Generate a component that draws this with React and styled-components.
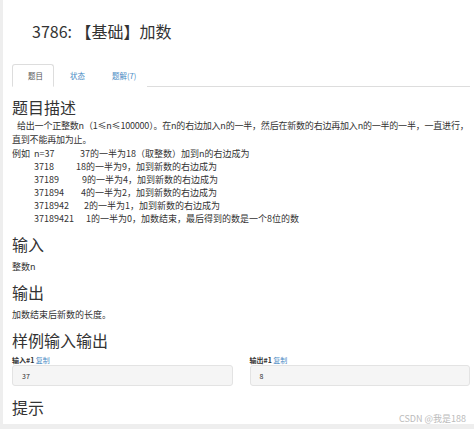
import React from 'react';
import styled, { createGlobalStyle } from 'styled-components';

const GlobalStyle = createGlobalStyle`
  html, body {
    margin: 0;
    padding: 0;
    background: #eeeeee;
  }
  body {
    font-family: "Noto Sans CJK SC", "Noto Sans", sans-serif;
    color: #333;
  }
`;

const TABS = [
  { label: '题目', active: true },
  { label: '状态' },
  { label: '题解(7)' },
];

const EXAMPLES = [
  { lead: '例如', num: 'n=37', descX: 80, desc: '37的一半为18（取整数）加到n的右边成为' },
  { num: '3718', descX: 76, desc: '18的一半为9，加到新数的右边成为' },
  { num: '37189', descX: 82, desc: '9的一半为4，加到新数的右边成为' },
  { num: '371894', descX: 81, desc: '4的一半为2，加到新数的右边成为' },
  { num: '3718942', descX: 84, desc: '2的一半为1，加到新数的右边成为' },
  { num: '37189421', descX: 86, desc: '1的一半为0，加数结束，最后得到的数是一个8位的数' },
];

const SAMPLES = [
  { label: '输入#1', value: '37' },
  { label: '输出#1', value: '8' },
];

const App = () => {
  return (
    <>
      <GlobalStyle />
      <Panel>
        <Title>3786: 【基础】加数</Title>
        <TabBar>
          {TABS.map((tab) => (
            <Tab key={tab.label} active={tab.active}>
              {tab.label}
            </Tab>
          ))}
        </TabBar>

        <Heading first>题目描述</Heading>
        <Body first>
          <Intro>
            给出一个正整数n（1≤n≤100000）。在n的右边加入n的一半，然后在新数的右边再加入n的一半的一半，一直进行，
            <br />
            直到不能再加为止。
          </Intro>
          {EXAMPLES.map((row) => (
            <ExampleRow key={row.num}>
              <Lead>{row.lead}</Lead>
              <Num style={{ width: row.descX - 34 }}>{row.num}</Num>
              <span>{row.desc}</span>
            </ExampleRow>
          ))}
        </Body>

        <Heading>输入</Heading>
        <Body>整数n</Body>

        <Heading>输出</Heading>
        <Body>加数结束后新数的长度。</Body>

        <Heading>样例输入输出</Heading>
        <SampleGrid>
          {SAMPLES.map((s) => (
            <div key={s.label}>
              <SampleLabel>
                {s.label} <CopyLink>复制</CopyLink>
              </SampleLabel>
              <SampleBox>{s.value}</SampleBox>
            </div>
          ))}
        </SampleGrid>

        <Heading hint>提示</Heading>
        <Watermark>CSDN @我是188</Watermark>
      </Panel>
    </>
  );
};

const Panel = styled.div`
  position: relative;
  box-sizing: border-box;
  margin-left: 3px;
  height: 424px;
  padding: 21px 4px 0 9px;
  background: #fff;
  overflow: hidden;
`;

const Title = styled.h1`
  margin: 0 0 23px 20px;
  font-size: 16px;
  line-height: 20px;
  font-weight: 400;
  color: #333;
`;

const TabBar = styled.div`
  display: flex;
  height: 22px;
  border-bottom: 1px solid #ddd;
`;

const Tab = styled.div`
  box-sizing: border-box;
  height: 23px;
  padding: 0 10px 0 15px;
  display: flex;
  align-items: center;
  font-size: 7.5px;
  color: ${(p) => (p.active ? '#555' : '#4a8bc4')};
  background: #fff;
  border: 1px solid ${(p) => (p.active ? '#ddd' : 'transparent')};
  border-bottom-color: ${(p) => (p.active ? '#fff' : 'transparent')};
  border-radius: 3px 3px 0 0;
`;

const Heading = styled.h2`
  margin: ${(p) => (p.first ? '11px' : p.hint ? '12px' : '10px')} 0 0;
  font-size: 16px;
  line-height: 18px;
  font-weight: 400;
  color: #333;
`;

const Body = styled.div`
  margin-top: ${(p) => (p.first ? '3px' : '7px')};
  font-size: 9px;
  line-height: 13px;
  color: #333;
`;

const Intro = styled.p`
  margin: 0;
  line-height: 14px;
  text-indent: 5px;
  letter-spacing: -0.2px;
  white-space: nowrap;
`;

const ExampleRow = styled.div`
  display: flex;
  white-space: nowrap;
`;

const Lead = styled.span`
  width: 22px;
  flex-shrink: 0;
`;

const Num = styled.span`
  flex-shrink: 0;
`;

const SampleGrid = styled.div`
  display: grid;
  grid-template-columns: 1fr 1fr;
  column-gap: 17px;
  margin-top: 6px;
`;

const SampleLabel = styled.div`
  font-size: 7px;
  line-height: 10px;
  font-weight: 700;
  color: #333;
`;

const CopyLink = styled.span`
  font-weight: 400;
  color: #4a8bc4;
`;

const SampleBox = styled.div`
  box-sizing: border-box;
  margin-top: 0;
  height: 21px;
  padding: 0 9px;
  display: flex;
  align-items: center;
  font-size: 7px;
  color: #333;
  background: #f5f5f5;
  border: 1px solid #e3e3e3;
  border-radius: 3px;
`;

const Watermark = styled.div`
  position: absolute;
  right: 8px;
  bottom: -1px;
  font-size: 9px;
  line-height: 12px;
  color: #bbb;
`;

export default App;
